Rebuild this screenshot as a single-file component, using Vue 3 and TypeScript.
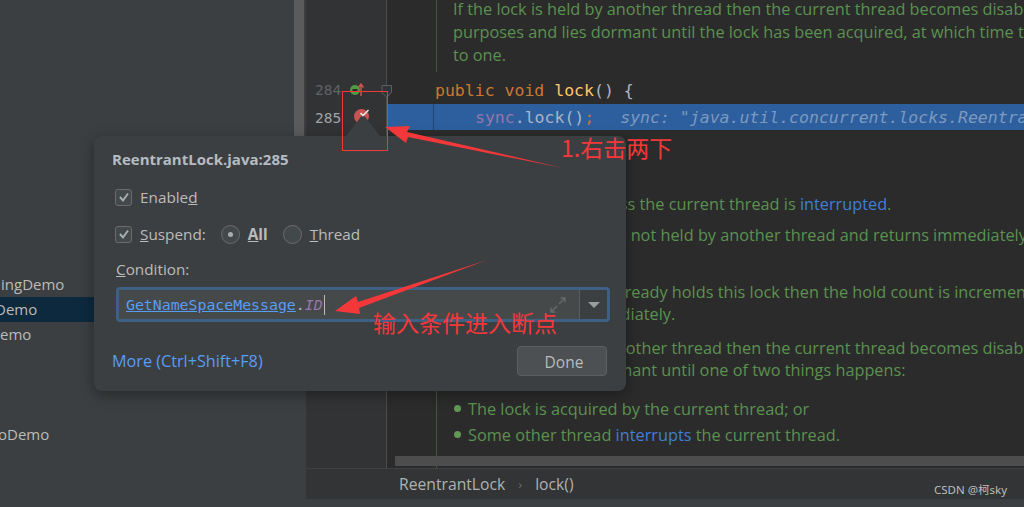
<script setup lang="ts">
const sideItems = [
  { text: 'ingDemo', selected: false, gap: false, shift: 1 },
  { text: 'Demo', selected: true, gap: false, shift: -5 },
  { text: 'emo', selected: false, gap: false, shift: 0 },
  { text: 'oDemo', selected: false, gap: true, shift: -2 },
]
</script>

<template>
  <div class="ide">
    <aside class="side">
      <div class="thumb"></div>
      <div v-for="item in sideItems" :key="item.text" class="side-row" :class="{ sel: item.selected, gap: item.gap }">
        <span :style="{ marginLeft: item.shift + 'px' }">{{ item.text }}</span>
      </div>
    </aside>
    <main class="main">
      <div class="editor">
        <div class="gutter">
          <div class="gutter-spacer"></div>
          <div class="gline"><span class="num dim">284</span></div>
          <div class="gline"><span class="num">285</span></div>
        </div>
        <div class="code">
          <div class="doc top">
            <p>If the lock is held by another thread then the current thread becomes disabled for thread scheduling</p>
            <p>purposes and lies dormant until the lock has been acquired, at which time the lock hold count is set</p>
            <p>to one.</p>
          </div>
          <div class="cline sig"><span class="kw">public void </span><span class="fn">lock</span>() {</div>
          <div class="cline exec"><span class="field">sync</span>.lock()<span class="kw">;</span><span class="hint">sync: "java.util.concurrent.locks.ReentrantLock$NonfairSync@1b2c3d"</span></div>
          <div class="doc lower">
            <p>Acquires the lock unless the current thread is <a>interrupted</a>.</p>
            <p class="l2">Acquires the lock if it is not held by another thread and returns immediately, setting</p>
            <p class="l3">If the current thread already holds this lock then the hold count is incremented by one</p>
            <p>method returns immediately.</p>
            <p class="l5">If the lock is held by another thread then the current thread becomes disabled for</p>
            <p>purposes and lies dormant until one of two things happens:</p>
            <ul>
              <li>The lock is acquired by the current thread; or</li>
              <li>Some other thread <a>interrupts</a> the current thread.</li>
            </ul>
          </div>
          <div class="guide green-top"></div>
          <div class="guide green-low"></div>
          <div class="guide dark"></div>
          <div class="hscroll"></div>
        </div>
      </div>
      <div class="crumbs">
        <span>ReentrantLock</span><span class="chev">›</span><span>lock()</span>
      </div>
    </main>
    <div class="statusbar"></div>

    <!-- gutter icons below the popup pointer -->
    <svg class="gicon" width="60" height="50" viewBox="0 0 60 50">
      <circle cx="15" cy="12" r="5" fill="#4f9a45" />
      <rect x="12.500" y="11" width="5" height="2" fill="#2b2b2b" />
      <path d="M21 18V7M18.500 9.500L21 6l2.500 3.500" stroke="#c9564d" stroke-width="1.500" fill="none" />
      <path d="M42 7.500h9.500v7l-4.750 5-4.750-5z" fill="#313335" stroke="#5d5f60" />
      <circle cx="21.500" cy="38.500" r="7.500" fill="#c75450" />
    </svg>

    <section class="popup">
      <svg class="pointer" width="34" height="22" viewBox="0 0 34 22"><path d="M0 22L17 0l17 22z" fill="#3c3f41" /></svg>
      <h3>ReentrantLock.java:285</h3>
      <div class="row first">
        <span class="check"><svg width="12" height="12" viewBox="0 0 12 12"><path d="M2 6l3 3.500L10 2.500" fill="none" stroke="#a9adb0" stroke-width="2" /></svg></span>
        <label>Enable<u>d</u></label>
      </div>
      <div class="row second">
        <span class="check"><svg width="12" height="12" viewBox="0 0 12 12"><path d="M2 6l3 3.500L10 2.500" fill="none" stroke="#a9adb0" stroke-width="2" /></svg></span>
        <label><u>S</u>uspend:</label>
        <span class="radio on"></span>
        <label class="bold"><u>A</u>ll</label>
        <span class="radio"></span>
        <label><u>T</u>hread</label>
      </div>
      <div class="cond"><u>C</u>ondition:</div>
      <div class="input">
        <div class="input-text"><span class="link">GetNameSpaceMessage</span><span class="dot">.</span><span class="id">ID</span><span class="caret"></span></div>
        <svg class="expand" width="18" height="18" viewBox="0 0 18 18"><path d="M10 8l6-6M11.500 2H16v4.500M8 10l-6 6M2 11.500V16h4.500" fill="none" stroke="#65696b" stroke-width="1.500" /></svg>
        <div class="dropdown"><span class="tri"></span></div>
      </div>
      <div class="foot">
        <a class="more">More (Ctrl+Shift+F8)</a>
        <button class="done" type="button">Done</button>
      </div>
    </section>

    <!-- annotations -->
    <div class="redbox"></div>
    <svg class="arrows" width="1024" height="507" viewBox="0 0 1024 507">
      <path d="M360.500 113l2.500 2.500 5.500-5.500" fill="none" stroke="#e6e6e6" stroke-width="1.600" />
      <path d="M563 168L407 132l3-6-25 1 21 16 2-6z" fill="#f4383a" />
      <path d="M487 260L358 302l-2-6-21 15 25 3-1-6z" fill="#f4383a" />
    </svg>
    <div class="note n1">1.右击两下</div>
    <div class="note n2">输入条件进入断点</div>
    <div class="mark">CSDN @柯sky</div>
  </div>
</template>

<style>
html, body { margin: 0; background: #2b2b2b; }
</style>

<style scoped>
.ide {
  position: relative;
  width: 1024px;
  height: 507px;
  overflow: hidden;
  display: flex;
  flex-wrap: wrap;
  align-content: flex-start;
  background: #2b2b2b;
  font-family: "Open Sans", "Noto Sans CJK SC", sans-serif;
  color: #bbbbbb;
}
.side {
  position: relative;
  width: 306px;
  height: 499px;
  background: #3c3f41;
  padding-top: 272px;
  box-sizing: border-box;
  font-size: 15px;
}
.thumb { position: absolute; left: 294px; top: 0; width: 10px; height: 140px; background: #595b5d; }
.side-row { height: 25px; line-height: 25px; white-space: nowrap; overflow: hidden; }
.side-row span { display: inline-block; }
.side-row.sel { background: #0d293e; }
.side-row.gap { margin-top: 75px; }
.main { width: 718px; height: 499px; display: flex; flex-direction: column; }
.editor { flex: 1; display: flex; min-height: 0; }
.gutter {
  width: 80px;
  background: #313335;
  border-right: 1px solid #4a4c4e;
  flex: none;
  font-family: "DejaVu Sans Mono", monospace;
  font-size: 14.500px;
}
.gutter-spacer { height: 77px; }
.gline { height: 27px; line-height: 27px; padding-left: 9px; }
.gline + .gline { line-height: 28px; }
.num { color: #a4a3a3; }
.num.dim { color: #606366; }
.code {
  flex: 1;
  position: relative;
  min-width: 0;
  white-space: nowrap;
  overflow: hidden;
}
.doc { font-size: 16.300px; color: #5b9150; padding-left: 66px; }
.doc p { margin: 0; }
.doc a { color: #3f7fd8; }
.doc.top p { height: 23px; line-height: 23px; }
.doc.top { height: 79px; margin-top: -2px; box-sizing: border-box; }
.cline {
  height: 27px;
  line-height: 27px;
  font-family: "DejaVu Sans Mono", monospace;
  font-size: 16.500px;
  color: #a9b7c6;
  padding-left: 48px;
}
.kw { color: #cc7832; }
.fn { color: #ffc66d; }
.field { color: #9876aa; }
.hint { color: #7d99bd; font-style: italic; margin-left: 26px; }
.exec { background: #2d5f9f; padding-left: 88px; height: 26px; line-height: 27px; }
.doc.lower { position: absolute; left: 0; top: 193px; right: 0; }
.doc.lower p { height: 22px; line-height: 22px; }
.doc .l2 { margin-top: 9px; }
.doc .l3 { margin-top: 35px; }
.doc .l5 { margin-top: 12px; }
.doc ul { margin: 15px 0 0; padding: 0; list-style: none; }
.doc li { height: 26px; line-height: 26px; padding-left: 15px; position: relative; }
.doc li::before {
  content: "";
  position: absolute;
  left: 1px;
  top: 9px;
  width: 7px;
  height: 7px;
  border-radius: 50%;
  background: #629755;
}
.guide { position: absolute; width: 1px; }
.green-top { left: 49px; top: 0; height: 72px; background: #3f5a3a; }
.green-low { left: 49px; top: 140px; bottom: 0; background: #3f5a3a; }
.dark { left: 46px; top: 104px; height: 26px; background: #23446f; }
.hscroll { position: absolute; left: 8px; right: 0; bottom: 2px; height: 10px; background: #4d4d4d; }
.crumbs {
  height: 30px;
  flex: none;
  background: #323436;
  border-top: 1px solid #3f4143;
  display: flex;
  align-items: center;
  padding-left: 93px;
  gap: 13px;
  font-size: 15.700px;
  color: #afb1b3;
}
.chev { color: #6a6a6a; font-size: 13px; }
.statusbar { width: 100%; height: 8px; background: #3c3f41; }
.gicon { position: absolute; left: 340px; top: 78px; }
.popup {
  position: absolute;
  left: 94px;
  top: 136px;
  width: 532px;
  height: 255px;
  box-sizing: border-box;
  background: #3c3f41;
  border-radius: 8px;
  box-shadow: 0 4px 14px rgba(0, 0, 0, 0.35);
  font-size: 15.300px;
  color: #bbbbbb;
  padding: 13px 18px 0;
}
.pointer { position: absolute; left: 252px; top: -22px; }
h3 { margin: 0; font-size: 15px; font-weight: 700; line-height: 20px; color: #b5bcc2; }
.row { display: flex; align-items: center; height: 22px; }
.row.first { margin-top: 17px; }
.row.second { margin-top: 15px; }
.check {
  width: 15px;
  height: 15px;
  border: 1px solid #6b6b6b;
  border-radius: 3px;
  background: #43494a;
  margin: 0 8px 0 3px;
  display: flex;
  align-items: center;
  justify-content: center;
  flex: none;
}
.radio {
  width: 17px;
  height: 17px;
  border: 1px solid #6b6b6b;
  border-radius: 50%;
  background: #43494a;
  margin: 0 8px 0 15px;
  position: relative;
  flex: none;
}
.radio.on::after {
  content: "";
  position: absolute;
  left: 6px;
  top: 6px;
  width: 5px;
  height: 5px;
  border-radius: 50%;
  background: #a9adb0;
}
.bold { font-weight: 700; }
.cond { margin-top: 13px; line-height: 22px; height: 22px; padding-left: 4px; }
.input {
  margin: 7px 0 0 4px;
  height: 35px;
  width: 494px;
  box-sizing: border-box;
  display: flex;
  align-items: center;
  border: 3px solid #3d6185;
  background: #45494a;
  border-radius: 4px;
}
.input-text {
  flex: 1;
  padding-left: 7px;
  font-family: "DejaVu Sans Mono", monospace;
  font-size: 14.850px;
  display: flex;
  align-items: center;
}
.link { color: #589df6; text-decoration: underline; }
.dot { color: #a9b7c6; }
.id { color: #9876aa; font-style: italic; }
.caret { width: 1px; height: 20px; background: #bbbbbb; margin-left: 1px; }
.expand { margin-right: 12px; }
.dropdown {
  width: 27px;
  height: 100%;
  background: #3c3f41;
  border-left: 1px solid #5a5d5f;
  display: flex;
  align-items: center;
  justify-content: center;
}
.tri { width: 0; height: 0; border-left: 6px solid transparent; border-right: 6px solid transparent; border-top: 6px solid #9a9da0; }
.foot { display: flex; justify-content: space-between; align-items: center; margin-top: 24px; }
.more { color: #589df6; font-size: 16.200px; }
.done {
  width: 90px;
  height: 30px;
  background: #4c5052;
  border: 1px solid #5e6060;
  border-radius: 4px;
  color: #bbbbbb;
  font: inherit;
  font-size: 15.500px;
  padding: 2px 0 0 4px;
  margin-right: 1px;
}
.redbox { position: absolute; left: 342px; top: 91px; width: 44px; height: 58px; border: 1px solid #f4383a; }
.arrows { position: absolute; left: 0; top: 0; pointer-events: none; }
.note { position: absolute; color: #f4383a; font-family: "Noto Sans CJK SC", sans-serif; white-space: nowrap; }
.n1 { left: 561px; top: 131px; font-size: 23px; line-height: 32px; }
.n2 { left: 373px; top: 306px; font-size: 23px; line-height: 32px; }
.mark {
  position: absolute;
  left: 934px;
  top: 482px;
  font-family: "Noto Sans", "Noto Sans CJK SC", sans-serif;
  font-size: 11.500px;
  color: #bdbdbd;
  line-height: 16px;
  white-space: nowrap;
}
</style>
